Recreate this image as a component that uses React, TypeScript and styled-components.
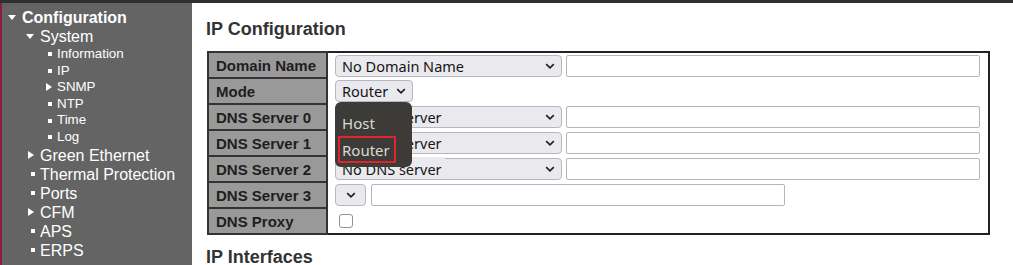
import React from 'react';
import styled, { createGlobalStyle } from 'styled-components';

const GlobalStyle = createGlobalStyle`
  html, body {
    margin: 0;
    padding: 0;
    background: #fff;
    overflow: hidden;
  }
  body {
    font-family: "Liberation Sans", Arial, sans-serif;
  }
`;

const Page = styled.div`
  width: 1013px;
  height: 265px;
  display: flex;
  flex-direction: column;
  overflow: hidden;
`;

const TopBar = styled.div`
  height: 3px;
  flex: none;
  background: #2f2f2f;
`;

const Body = styled.div`
  flex: 1;
  display: flex;
  min-height: 0;
`;

const Sidebar = styled.nav`
  width: 192px;
  flex: none;
  box-sizing: border-box;
  border-left: 2px solid #8a1d3d;
  background: #646464;
  padding-top: 5px;
  color: #fff;
`;

type Marker = 'down' | 'right' | 'bullet';

const TreeItem = styled.div<{ $level: number }>`
  display: flex;
  align-items: center;
  white-space: nowrap;
  padding-left: ${(p) => (p.$level === 1 ? 6 : p.$level === 2 ? 24 : 43)}px;
  font-size: ${(p) => (p.$level === 3 ? '13.33px' : '16px')};
  line-height: ${(p) => (p.$level === 3 ? '16.6px' : '19px')};
  font-weight: ${(p) => (p.$level === 1 ? 700 : 400)};
`;

const MarkerBox = styled.span<{ $level: number }>`
  display: inline-flex;
  align-items: center;
  flex: none;
  width: ${(p) => (p.$level === 3 ? 12 : 14)}px;
`;

const Glyph = styled.span<{ $kind: Marker; $level: number }>`
  display: block;
  width: 0;
  height: 0;
  ${(p) =>
    p.$kind === 'down'
      ? `border-left: 4.5px solid transparent;
         border-right: 4.5px solid transparent;
         border-top: 5px solid #fff;`
      : p.$kind === 'right'
      ? `border-top: 4px solid transparent;
         border-bottom: 4px solid transparent;
         border-left: 6px solid #fff;
         margin-left: ${p.$level === 3 ? 1 : 2}px;`
      : `width: 4px;
         height: 4px;
         background: #fff;
         margin-left: ${p.$level === 3 ? 3 : 5}px;`}
`;

const Main = styled.main`
  flex: 1;
  padding-left: 15px;
  min-width: 0;
`;

const Heading = styled.h2<{ $top: number; $bottom: number }>`
  margin: ${(p) => p.$top}px 0 ${(p) => p.$bottom}px -1px;
  font-size: 18px;
  line-height: 22px;
  font-weight: 700;
  color: #333;
`;

const ConfigTable = styled.table`
  border-collapse: collapse;
  border: 2px solid #222;
`;

const Label = styled.th`
  height: 24px;
  padding: 0 10px 0 7px;
  background: #999;
  border: 2px solid #333;
  text-align: left;
  white-space: nowrap;
  font-size: 15px;
  font-weight: 700;
  color: #1e1e1e;
`;

const Cell = styled.td`
  height: 24px;
  padding: 0 8px 0 7px;
  background: #fff;
`;

const Field = styled.div<{ $gap?: number }>`
  display: flex;
  align-items: center;
  gap: ${(p) => p.$gap ?? 4}px;
`;

const SelectBox = styled.div<{ $width: number; $iconOnly?: boolean }>`
  display: flex;
  align-items: center;
  justify-content: ${(p) => (p.$iconOnly ? 'center' : 'space-between')};
  box-sizing: border-box;
  width: ${(p) => p.$width}px;
  height: 22px;
  padding: 0 6px;
  border: 1px solid #b7b7c1;
  border-radius: 4px;
  background: #e9e9ee;
  font-family: "Noto Sans", sans-serif;
  font-size: 14.5px;
  color: #151515;
  white-space: nowrap;
  overflow: hidden;
`;

const TextInput = styled.input`
  box-sizing: border-box;
  width: 414px;
  height: 22px;
  margin: 0;
  border: 1px solid #b5b5be;
  border-radius: 2px;
  background: #fff;
`;

const Check = styled.input`
  appearance: none;
  box-sizing: border-box;
  width: 14px;
  height: 14px;
  margin: 0 0 0 4px;
  border: 1px solid #8f8f9d;
  border-radius: 3px;
  background: #fff;
  display: block;
`;

const ModeWrap = styled.div`
  position: relative;
  width: 78px;
`;

// native dropdown list drawn over the rows below the Mode select
const Popup = styled.div`
  position: absolute;
  top: 22px;
  left: 0;
  z-index: 2;
  box-sizing: border-box;
  width: 77px;
  height: 65px;
  padding-top: 7px;
  border-radius: 6px;
  background: #3c3b37;
  font-family: "Noto Sans", sans-serif;
  font-size: 15px;
  color: #dadad6;
`;

const PopupGhost = styled.div`
  position: absolute;
  top: 77px;
  left: 77px;
  z-index: 1;
  width: 33px;
  height: 9px;
  background: #e9e9ee;
`;

const Option = styled.div<{ $selected?: boolean }>`
  display: flex;
  align-items: center;
  box-sizing: border-box;
  width: 58px;
  height: 27px;
  margin-left: 3px;
  padding-left: ${(p) => (p.$selected ? 2 : 4)}px;
  border: ${(p) => (p.$selected ? '2px solid #e2232b' : 'none')};
`;

const Chevron = () => (
  <svg width="10" height="6" viewBox="0 0 10 6" aria-hidden="true">
    <path d="M1.2 1.2 L5 4.8 L8.8 1.2" fill="none" stroke="#222" strokeWidth="1.7" />
  </svg>
);

const Select = ({ width, value }: { width: number; value?: string }) => (
  <SelectBox $width={width} $iconOnly={!value}>
    {value && <span>{value}</span>}
    <Chevron />
  </SelectBox>
);

const tree: { label: string; level: number; marker: Marker }[] = [
  { label: 'Configuration', level: 1, marker: 'down' },
  { label: 'System', level: 2, marker: 'down' },
  { label: 'Information', level: 3, marker: 'bullet' },
  { label: 'IP', level: 3, marker: 'bullet' },
  { label: 'SNMP', level: 3, marker: 'right' },
  { label: 'NTP', level: 3, marker: 'bullet' },
  { label: 'Time', level: 3, marker: 'bullet' },
  { label: 'Log', level: 3, marker: 'bullet' },
  { label: 'Green Ethernet', level: 2, marker: 'right' },
  { label: 'Thermal Protection', level: 2, marker: 'bullet' },
  { label: 'Ports', level: 2, marker: 'bullet' },
  { label: 'CFM', level: 2, marker: 'right' },
  { label: 'APS', level: 2, marker: 'bullet' },
  { label: 'ERPS', level: 2, marker: 'bullet' },
];

function App(): JSX.Element {
  return (
    <Page>
      <GlobalStyle />
      <TopBar />
      <Body>
        <Sidebar>
          {tree.map((t) => (
            <TreeItem key={t.label} $level={t.level}>
              <MarkerBox $level={t.level}>
                <Glyph $kind={t.marker} $level={t.level} />
              </MarkerBox>
              {t.label}
            </TreeItem>
          ))}
        </Sidebar>

        <Main>
          <Heading $top={15} $bottom={11}>IP Configuration</Heading>
          <ConfigTable>
            <tbody>
              <tr>
                <Label>Domain Name</Label>
                <Cell>
                  <Field>
                    <Select width={227} value="No Domain Name" />
                    <TextInput type="text" />
                  </Field>
                </Cell>
              </tr>
              <tr>
                <Label>Mode</Label>
                <Cell>
                  <ModeWrap>
                    <Select width={78} value="Router" />
                    <PopupGhost />
                    <Popup>
                      <Option>Host</Option>
                      <Option $selected>Router</Option>
                    </Popup>
                  </ModeWrap>
                </Cell>
              </tr>
              {[0, 1, 2].map((n) => (
                <tr key={n}>
                  <Label>DNS Server {n}</Label>
                  <Cell>
                    <Field>
                      <Select width={227} value="No DNS server" />
                      <TextInput type="text" />
                    </Field>
                  </Cell>
                </tr>
              ))}
              <tr>
                <Label>DNS Server 3</Label>
                <Cell>
                  <Field $gap={5}>
                    <Select width={31} />
                    <TextInput type="text" />
                  </Field>
                </Cell>
              </tr>
              <tr>
                <Label>DNS Proxy</Label>
                <Cell>
                  <Check type="checkbox" />
                </Cell>
              </tr>
            </tbody>
          </ConfigTable>
          <Heading $top={11} $bottom={0}>IP Interfaces</Heading>
        </Main>
      </Body>
    </Page>
  );
}

export default App;
